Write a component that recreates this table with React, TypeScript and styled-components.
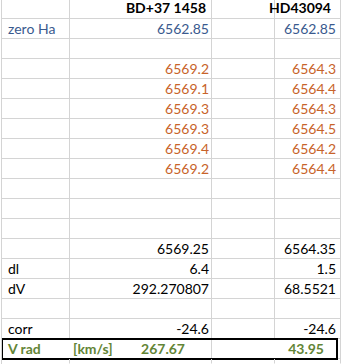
import React from 'react';
import styled, { createGlobalStyle } from 'styled-components';

const GlobalStyle = createGlobalStyle`
  html, body {
    margin: 0;
    padding: 0;
    background: #fff;
  }
  body {
    font-family: Lato, "Open Sans", "Liberation Sans", sans-serif;
    font-size: 14px;
  }
`;

type Tone = 'black' | 'blue' | 'orange' | 'green';

const toneColors: Record<Tone, string> = {
  black: '#000000',
  blue: '#3a5a8e',
  orange: '#c8632a',
  green: '#638536',
};

const Sheet = styled.div`
  width: 340px;
  height: 364px;
  margin-left: 1px;
  border-left: 1px solid #d4d4d4;
  overflow: hidden;
  display: flex;
  flex-direction: column;
`;

const Row = styled.div<{ $h?: number; $boxed?: boolean }>`
  position: relative;
  display: grid;
  grid-template-columns: 68px 142px 63px 66px;
  height: ${p => p.$h ?? 20}px;
  flex: none;

  ${p => p.$boxed && `
    &::after {
      content: '';
      position: absolute;
      left: -1px;
      top: -1px;
      width: 337px;
      height: 22px;
      border: 2px solid #000;
      box-sizing: border-box;
      pointer-events: none;
    }
  `}
`;

const Cell = styled.div<{
  $right?: boolean;
  $tone?: Tone;
  $bold?: boolean;
  $pl?: number;
  $pr?: number;
  $pb?: number;
  $noGrid?: boolean;
  $noBottom?: boolean;
}>`
  box-sizing: border-box;
  min-width: 0;
  display: flex;
  align-items: flex-end;
  justify-content: ${p => (p.$right ? 'flex-end' : 'flex-start')};
  padding: 0 ${p => p.$pr ?? 3}px ${p => p.$pb ?? 2}px ${p => p.$pl ?? 3}px;
  border-right: 1px solid ${p => (p.$noGrid ? 'transparent' : '#d4d4d4')};
  border-bottom: 1px solid ${p => (p.$noBottom ? 'transparent' : '#d4d4d4')};
  color: ${p => toneColors[p.$tone ?? 'black']};
  font-weight: ${p => (p.$bold ? 700 : 400)};
  line-height: 1;
  white-space: nowrap;
`;

interface LineProps {
  label?: string;
  b?: string;
  d?: string;
  tone?: Tone;
  labelTone?: Tone;
}

// one ordinary spreadsheet row: label in A, values right aligned in B and D
const Line = ({ label, b, d, tone = 'black', labelTone }: LineProps) => (
  <Row>
    <Cell $tone={labelTone ?? tone} $pl={6}>{label}</Cell>
    <Cell $right $tone={tone} $pr={2}>{b}</Cell>
    <Cell />
    <Cell $right $tone={tone} $pr={4}>{d}</Cell>
  </Row>
);

const measurements: [string, string][] = [
  ['6569.2', '6564.3'],
  ['6569.1', '6564.4'],
  ['6569.3', '6564.3'],
  ['6569.3', '6564.5'],
  ['6569.4', '6564.2'],
  ['6569.2', '6564.4'],
];

const App = () => (
  <>
    <GlobalStyle />
    <Sheet>
      <Row $h={19}>
        <Cell />
        <Cell $right $bold $pr={5} $pb={3}>BD+37 1458</Cell>
        <Cell />
        <Cell $right $bold $pr={9} $pb={3}>HD43094</Cell>
      </Row>
      <Line label="zero Ha" b="6562.85" d="6562.85" tone="blue" />
      <Line />
      {measurements.map(([b, d], i) => (
        <Line key={i} b={b} d={d} tone="orange" />
      ))}
      <Line />
      <Line />
      <Line />
      <Line b="6569.25" d="6564.35" />
      <Line label="dl" b="6.4" d="1.5" />
      <Line label="dV" b="292.270807" d="68.5521" />
      <Line />
      <Line label="corr" b="-24.6" d="-24.6" />
      <Row $boxed>
        <Cell $tone="green" $bold $pl={6} $noGrid>V rad</Cell>
        <Cell $tone="green" $bold $pl={3} $pr={26}>
          <span>[km/s]</span>
          <span style={{ marginLeft: 'auto' }}>267.67</span>
        </Cell>
        <Cell $noGrid />
        <Cell $right $tone="green" $bold $pr={16}>43.95</Cell>
      </Row>
      <Row $h={5}>
        <Cell $noBottom />
        <Cell $noBottom />
        <Cell $noBottom />
        <Cell $noBottom />
      </Row>
    </Sheet>
  </>
);

export default App;
